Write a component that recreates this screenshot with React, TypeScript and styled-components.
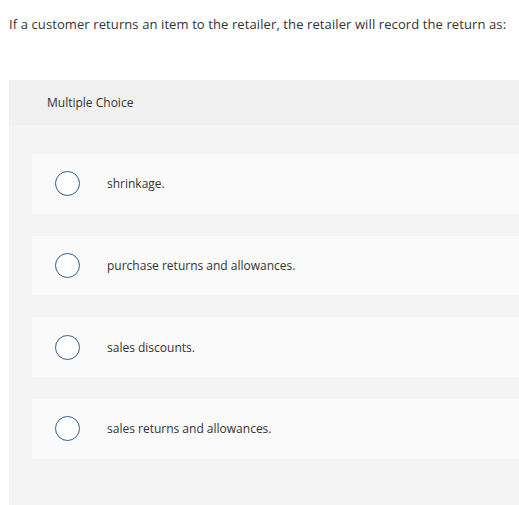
import React from 'react';
import styled, { createGlobalStyle } from 'styled-components';

const GlobalStyle = createGlobalStyle`
  html, body {
    margin: 0;
    padding: 0;
    background: #ffffff;
  }
  body {
    font-family: 'Open Sans', 'Liberation Sans', Arial, sans-serif;
    color: #333333;
  }
`;

const Page = styled.div`
  width: 519px;
  height: 505px;
  overflow: hidden;
`;

const Question = styled.p`
  margin: 0;
  padding: 16px 0 0 9px;
  height: 80px;
  box-sizing: border-box;
  font-size: 13px;
  line-height: 16px;
  letter-spacing: 0.1px;
  color: #333;
`;

const Panel = styled.section`
  margin-left: 9px;
  background: #f4f4f4;
  height: 425px;
`;

const PanelHeader = styled.div`
  height: 45px;
  display: flex;
  align-items: center;
  padding-left: 38px;
  background: #f0f0f0;
  font-size: 12px;
  color: #333;
`;

const OptionList = styled.div`
  display: flex;
  flex-direction: column;
  gap: 22px;
  padding: 29px 0 0 23px;
`;

const Option = styled.label`
  height: 59.7px;
  display: flex;
  align-items: center;
  background: #fafafa;
  cursor: pointer;
`;

const Radio = styled.span`
  width: 25px;
  height: 25px;
  box-sizing: border-box;
  border: 1.5px solid #2d5e8e;
  border-radius: 50%;
  background: #ffffff;
  margin-left: 23px;
  margin-right: 27px;
  flex-shrink: 0;
`;

const OptionText = styled.span`
  font-size: 12px;
  color: #333;
`;

const options = [
  'shrinkage.',
  'purchase returns and allowances.',
  'sales discounts.',
  'sales returns and allowances.',
];

const App = () => (
  <Page>
    <GlobalStyle />
    <Question>
      If a customer returns an item to the retailer, the retailer will record the return as:
    </Question>
    <Panel>
      <PanelHeader>Multiple Choice</PanelHeader>
      <OptionList>
        {options.map((text) => (
          <Option key={text}>
            <Radio />
            <OptionText>{text}</OptionText>
          </Option>
        ))}
      </OptionList>
    </Panel>
  </Page>
);

export default App;
